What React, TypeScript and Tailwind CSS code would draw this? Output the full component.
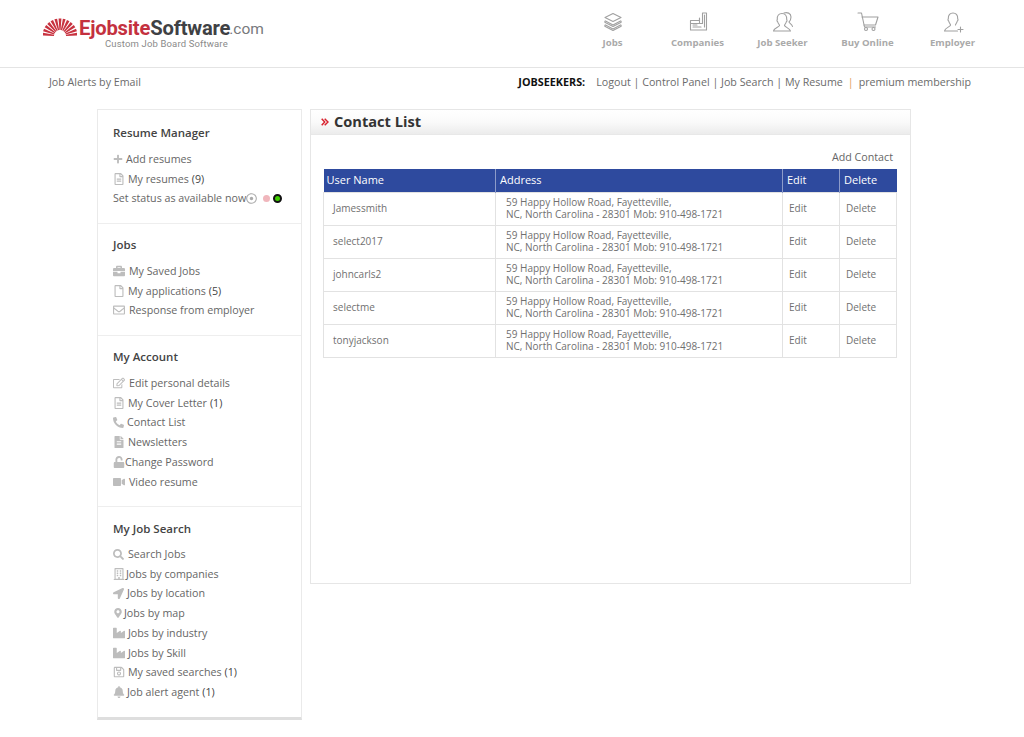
import type { ReactNode } from 'react';
import {
  FaPlus,
  FaRegFileAlt,
  FaBriefcase,
  FaRegFile,
  FaRegEnvelope,
  FaRegEdit,
  FaPhone,
  FaFileAlt,
  FaUnlock,
  FaVideo,
  FaSearch,
  FaRegBuilding,
  FaLocationArrow,
  FaMapMarkerAlt,
  FaIndustry,
  FaRegSave,
  FaBell,
  FaRegDotCircle,
} from 'react-icons/fa';

type Item = { icon: ReactNode; label: string; count?: string; gap: string };

const ic = 'text-[#bdbdbd] text-[12px] shrink-0';
const icSmall = 'text-[#bdbdbd] text-[11px] shrink-0';

const resumeItems: Item[] = [
  { icon: <FaPlus className="text-[#bdbdbd] text-[10px] shrink-0" />, label: 'Add resumes', gap: 'gap-[3px]' },
  { icon: <FaRegFileAlt className={ic} />, label: 'My resumes', count: '(9)', gap: 'gap-[3px]' },
];

const sections: { title: string; items: Item[] }[] = [
  {
    title: 'Jobs',
    items: [
      { icon: <FaBriefcase className={ic} />, label: 'My Saved Jobs', gap: 'gap-[4px]' },
      { icon: <FaRegFile className={ic} />, label: 'My applications', count: '(5)', gap: 'gap-[3px]' },
      { icon: <FaRegEnvelope className={ic} />, label: 'Response from employer', gap: 'gap-[4px]' },
    ],
  },
  {
    title: 'My Account',
    items: [
      { icon: <FaRegEdit className={ic} />, label: 'Edit personal details', gap: 'gap-[4px]' },
      { icon: <FaRegFileAlt className={ic} />, label: 'My Cover Letter', count: '(1)', gap: 'gap-[3px]' },
      { icon: <FaPhone className={`${icSmall} -scale-x-100`} />, label: 'Contact List', gap: 'gap-[3px]' },
      { icon: <FaFileAlt className={ic} />, label: 'Newsletters', gap: 'gap-[3px]' },
      { icon: <FaUnlock className={ic} />, label: 'Change Password', gap: 'gap-0' },
      { icon: <FaVideo className={ic} />, label: 'Video resume', gap: 'gap-[4px]' },
    ],
  },
  {
    title: 'My Job Search',
    items: [
      { icon: <FaSearch className={icSmall} />, label: 'Search Jobs', gap: 'gap-[4px]' },
      { icon: <FaRegBuilding className={ic} />, label: 'Jobs by companies', gap: 'gap-[1px]' },
      { icon: <FaLocationArrow className={icSmall} />, label: 'Jobs by location', gap: 'gap-[3px]' },
      { icon: <FaMapMarkerAlt className="text-[#bdbdbd] text-[10px] shrink-0" />, label: 'Jobs by map', gap: 'gap-[1px]' },
      { icon: <FaIndustry className={ic} />, label: 'Jobs by industry', gap: 'gap-[3px]' },
      { icon: <FaIndustry className={ic} />, label: 'Jobs by Skill', gap: 'gap-[3px]' },
      { icon: <FaRegSave className={ic} />, label: 'My saved searches', count: '(1)', gap: 'gap-[3px]' },
      { icon: <FaBell className={ic} />, label: 'Job alert agent', count: '(1)', gap: 'gap-[2px]' },
    ],
  },
];

const contacts = ['Jamessmith', 'select2017', 'johncarls2', 'selectme', 'tonyjackson'];

function NavIcon({ children }: { children: ReactNode }) {
  return (
    <svg width="24" height="24" viewBox="0 0 24 24" fill="none" stroke="#a0a0a0" strokeWidth="1.100" strokeLinejoin="round" strokeLinecap="round">
      {children}
    </svg>
  );
}

const navItems: { label: string; icon: ReactNode }[] = [
  {
    label: 'Jobs',
    icon: (
      <NavIcon>
        <path d="M12 3.500l8 4-8 4-8-4z" />
        <path d="M4.500 11l7.500 4 7.500-4" />
        <path d="M4 11l-.2 1.200 8.200 4.300 8.200-4.300L20 11" />
        <path d="M4.500 15l7.500 4 7.500-4" />
        <path d="M4 15l-.2 1.200 8.200 4.300 8.200-4.300L20 15" />
      </NavIcon>
    ),
  },
  {
    label: 'Companies',
    icon: (
      <NavIcon>
        <path d="M4.500 10.500h9v-2M4.500 10.500v9.500h16V3h-4v10.500h-12" />
        <path d="M13.500 8v5.500M7 15h4M7 17h8M18.500 5v12" />
      </NavIcon>
    ),
  },
  {
    label: 'Job Seeker',
    icon: (
      <NavIcon>
        <path d="M8.500 15.500c0-1-1.500-2-1.800-3.700-.8-.4-.9-1.900-.4-2.300C5.800 5.500 8 3.500 11 3.500s5 2 4.700 6c.5.4.4 1.900-.4 2.300-.3 1.700-1.800 2.700-1.800 3.700" />
        <path d="M8.500 15.500c-.3 1.500-5.500 2.500-6 5.500h17c-.3-2.500-5.500-3.800-6-5.500" />
        <path d="M13 3c3-1 7 0 7 4 0 2-1 4-2 5 0 1 3 2 3.500 4.500" />
      </NavIcon>
    ),
  },
  {
    label: 'Buy Online',
    icon: (
      <NavIcon>
        <path d="M2 3h3.500l3 14h11" />
        <path d="M6 7h16l-2.500 8H8" />
        <circle cx="10" cy="19" r="1.500" />
        <circle cx="17.500" cy="19" r="1.500" />
      </NavIcon>
    ),
  },
  {
    label: 'Employer',
    icon: (
      <NavIcon>
        <path d="M9.500 15c0-1-1.500-2.200-1.800-4-.8-.4-.9-1.800-.4-2.200C7 5 9.300 3 12 3s5 2 4.700 5.800c.5.4.4 1.800-.4 2.200-.3 1.800-1.800 3-1.800 4" />
        <path d="M9.500 15c-.3 1.800-5.500 2.800-6 6h13" />
        <path d="M19.500 17v5M17 19.500h5" />
      </NavIcon>
    ),
  },
];

// sunburst drawn from rays around the logo's base point
function LogoBurst() {
  const rays = [-84, -70, -56, -42, -28, -14, 0, 14, 28, 42, 56, 70, 84];
  return (
    <svg width="34" height="18" viewBox="0 0 34 18" className="mb-[2px] shrink-0">
      {rays.map((a) => (
        <g key={a} transform={`rotate(${a} 17 18)`}>
          <path d="M15.600 0.500h2.800l-.8 11.500h-1.200z" fill="#c8323f" />
        </g>
      ))}
    </svg>
  );
}

function SideLine({ item }: { item: Item }) {
  return (
    <li className={`flex items-center h-[19.700px] ${item.gap}`}>
      {item.icon}
      <span>
        {item.label}
        {item.count && <span className="text-[#444] ml-[3px]">{item.count}</span>}
      </span>
    </li>
  );
}

function SideHeading({ title }: { title: string }) {
  return <h3 className="text-[11.500px] leading-[18px] font-semibold text-[#444]">{title}</h3>;
}

export default function App() {
  return (
    <div className="min-h-[737px] bg-white text-[10.700px] text-[#666] font-['Open_Sans',sans-serif]">
      {/* Header */}
      <header className="h-[68px] border-b border-[#e4e4e4] flex justify-between">
        <div className="pl-[43px] pt-[19px]">
          <div className="flex items-end h-[19px]">
            <LogoBurst />
            <span className="ml-[2px] font-['Roboto',sans-serif] font-bold text-[20.200px] leading-[19px] tracking-[-0.2px] text-[#c4313f]">Ejobsite</span>
            <span className="font-['Roboto',sans-serif] font-bold text-[20.200px] leading-[19px] tracking-[-0.2px] text-[#3f4144]">Software</span>
            <span className="-ml-[1px] font-['Roboto',sans-serif] text-[15.500px] leading-[18px] text-[#77797c]">.com</span>
          </div>
          <div className="pl-[62px] font-['Roboto',sans-serif] text-[9.500px] leading-[11px] tracking-[0.15px] text-[#8a8a8a]">Custom Job Board Software</div>
        </div>
        <nav className="flex pt-[10px] pr-[29px]">
          {navItems.map((n) => (
            <div key={n.label} className="flex flex-col items-center w-[85px]">
              <div className="h-[25px]">{n.icon}</div>
              <div className="mt-[1px] text-[9.600px] leading-[14px] font-bold text-[#aaa] whitespace-nowrap">{n.label}</div>
            </div>
          ))}
        </nav>
      </header>

      {/* Sub bar */}
      <div className="h-[28px] flex justify-between items-center pl-[49px] pr-[53px] text-[#6b6b6b]">
        <span>Job Alerts by Email</span>
        <div className="flex items-baseline whitespace-nowrap">
          <b className="text-[#111] text-[10.800px] mr-[11px]">JOBSEEKERS:</b>
          <span>Logout | Control Panel | Job Search | My Resume</span>
          <span className="text-[#e0a060] mx-[5px]">|</span>
          <span>premium membership</span>
        </div>
      </div>

      {/* Body */}
      <div className="flex items-start pl-[97px] pt-[13px] gap-[8px]">
        <aside className="w-[205px] h-[611px] border border-[#eaeaea] border-b-[3px] border-b-[#dedede]">
          <section className="h-[114px] px-[15px] pt-[14px] border-b border-[#eeeeee]">
            <SideHeading title="Resume Manager" />
            <ul className="mt-[7px]">
              {resumeItems.map((i) => <SideLine key={i.label} item={i} />)}
              <li className="flex items-center h-[19.700px] whitespace-nowrap">
                <span>Set status as available now</span>
                <FaRegDotCircle className="text-[#aaa] text-[11px]" />
                <span className="ml-[6px] w-[7px] h-[7px] rounded-full bg-[#f0b6bc]" />
                <span className="ml-[3px] w-[9px] h-[9px] rounded-full bg-[#3fcf00] border-[2px] border-[#111]" />
              </li>
            </ul>
          </section>
          <section className="h-[112px] px-[15px] pt-[12px] border-b border-[#eeeeee]">
            <SideHeading title={sections[0].title} />
            <ul className="mt-[7px]">{sections[0].items.map((i) => <SideLine key={i.label} item={i} />)}</ul>
          </section>
          <section className="h-[171px] px-[15px] pt-[12px] border-b border-[#eeeeee]">
            <SideHeading title={sections[1].title} />
            <ul className="mt-[7.300px]">{sections[1].items.map((i) => <SideLine key={i.label} item={i} />)}</ul>
          </section>
          <section className="px-[15px] pt-[13px]">
            <SideHeading title={sections[2].title} />
            <ul className="mt-[6.300px]">{sections[2].items.map((i) => <SideLine key={i.label} item={i} />)}</ul>
          </section>
        </aside>

        {/* Main */}
        <main className="w-[601px] h-[475px] border border-[#e6e6e6]">
          <div className="h-[25px] border-b border-[#e8e8e8] flex items-center pl-[10px] bg-gradient-to-b from-white via-[#fafafa] to-[#ececec]">
            <svg width="8" height="8" viewBox="0 0 8 8" className="mr-[5px] shrink-0" fill="none" stroke="#d8232f" strokeWidth="1.500">
              <path d="M.7 .7L3.700 4 .7 7.300M3.700 .7L7 4 3.700 7.300" />
            </svg>
            <h2 className="text-[14.600px] font-bold text-[#333]">Contact List</h2>
          </div>
          <div className="px-[12px]">
            <div className="h-[34px] flex items-end justify-end pr-[5px] pb-[4px] text-[#666]">Add Contact</div>
            <table className="w-[573px] table-fixed border-collapse">
              <colgroup>
                <col className="w-[172px]" />
                <col className="w-[287px]" />
                <col className="w-[57px]" />
                <col className="w-[57px]" />
              </colgroup>
              <thead>
                <tr className="h-[23px] bg-[#2e4a9e] text-white text-left text-[11px]">
                  {['User Name', 'Address', 'Edit', 'Delete'].map((h, i) => (
                    <th key={h} className={`font-normal ${i > 0 ? 'pl-[4px] border-l border-[#8d9bc9]' : 'pl-[3px]'}`}>{h}</th>
                  ))}
                </tr>
              </thead>
              <tbody>
                {contacts.map((c) => (
                  <tr key={c} className="h-[33px] text-[#707070] text-[10px]">
                    <td className="border border-[#e2e2e2] pl-[9px]">{c}</td>
                    <td className="border border-[#e2e2e2] pl-[10px] pb-[2px] leading-[12px]">
                      59 Happy Hollow Road, Fayetteville,
                      <br />
                      NC, North Carolina - 28301 Mob: 910-498-1721
                    </td>
                    <td className="border border-[#e2e2e2] pl-[6px]">Edit</td>
                    <td className="border border-[#e2e2e2] pl-[6px]">Delete</td>
                  </tr>
                ))}
              </tbody>
            </table>
          </div>
        </main>
      </div>
    </div>
  );
}
